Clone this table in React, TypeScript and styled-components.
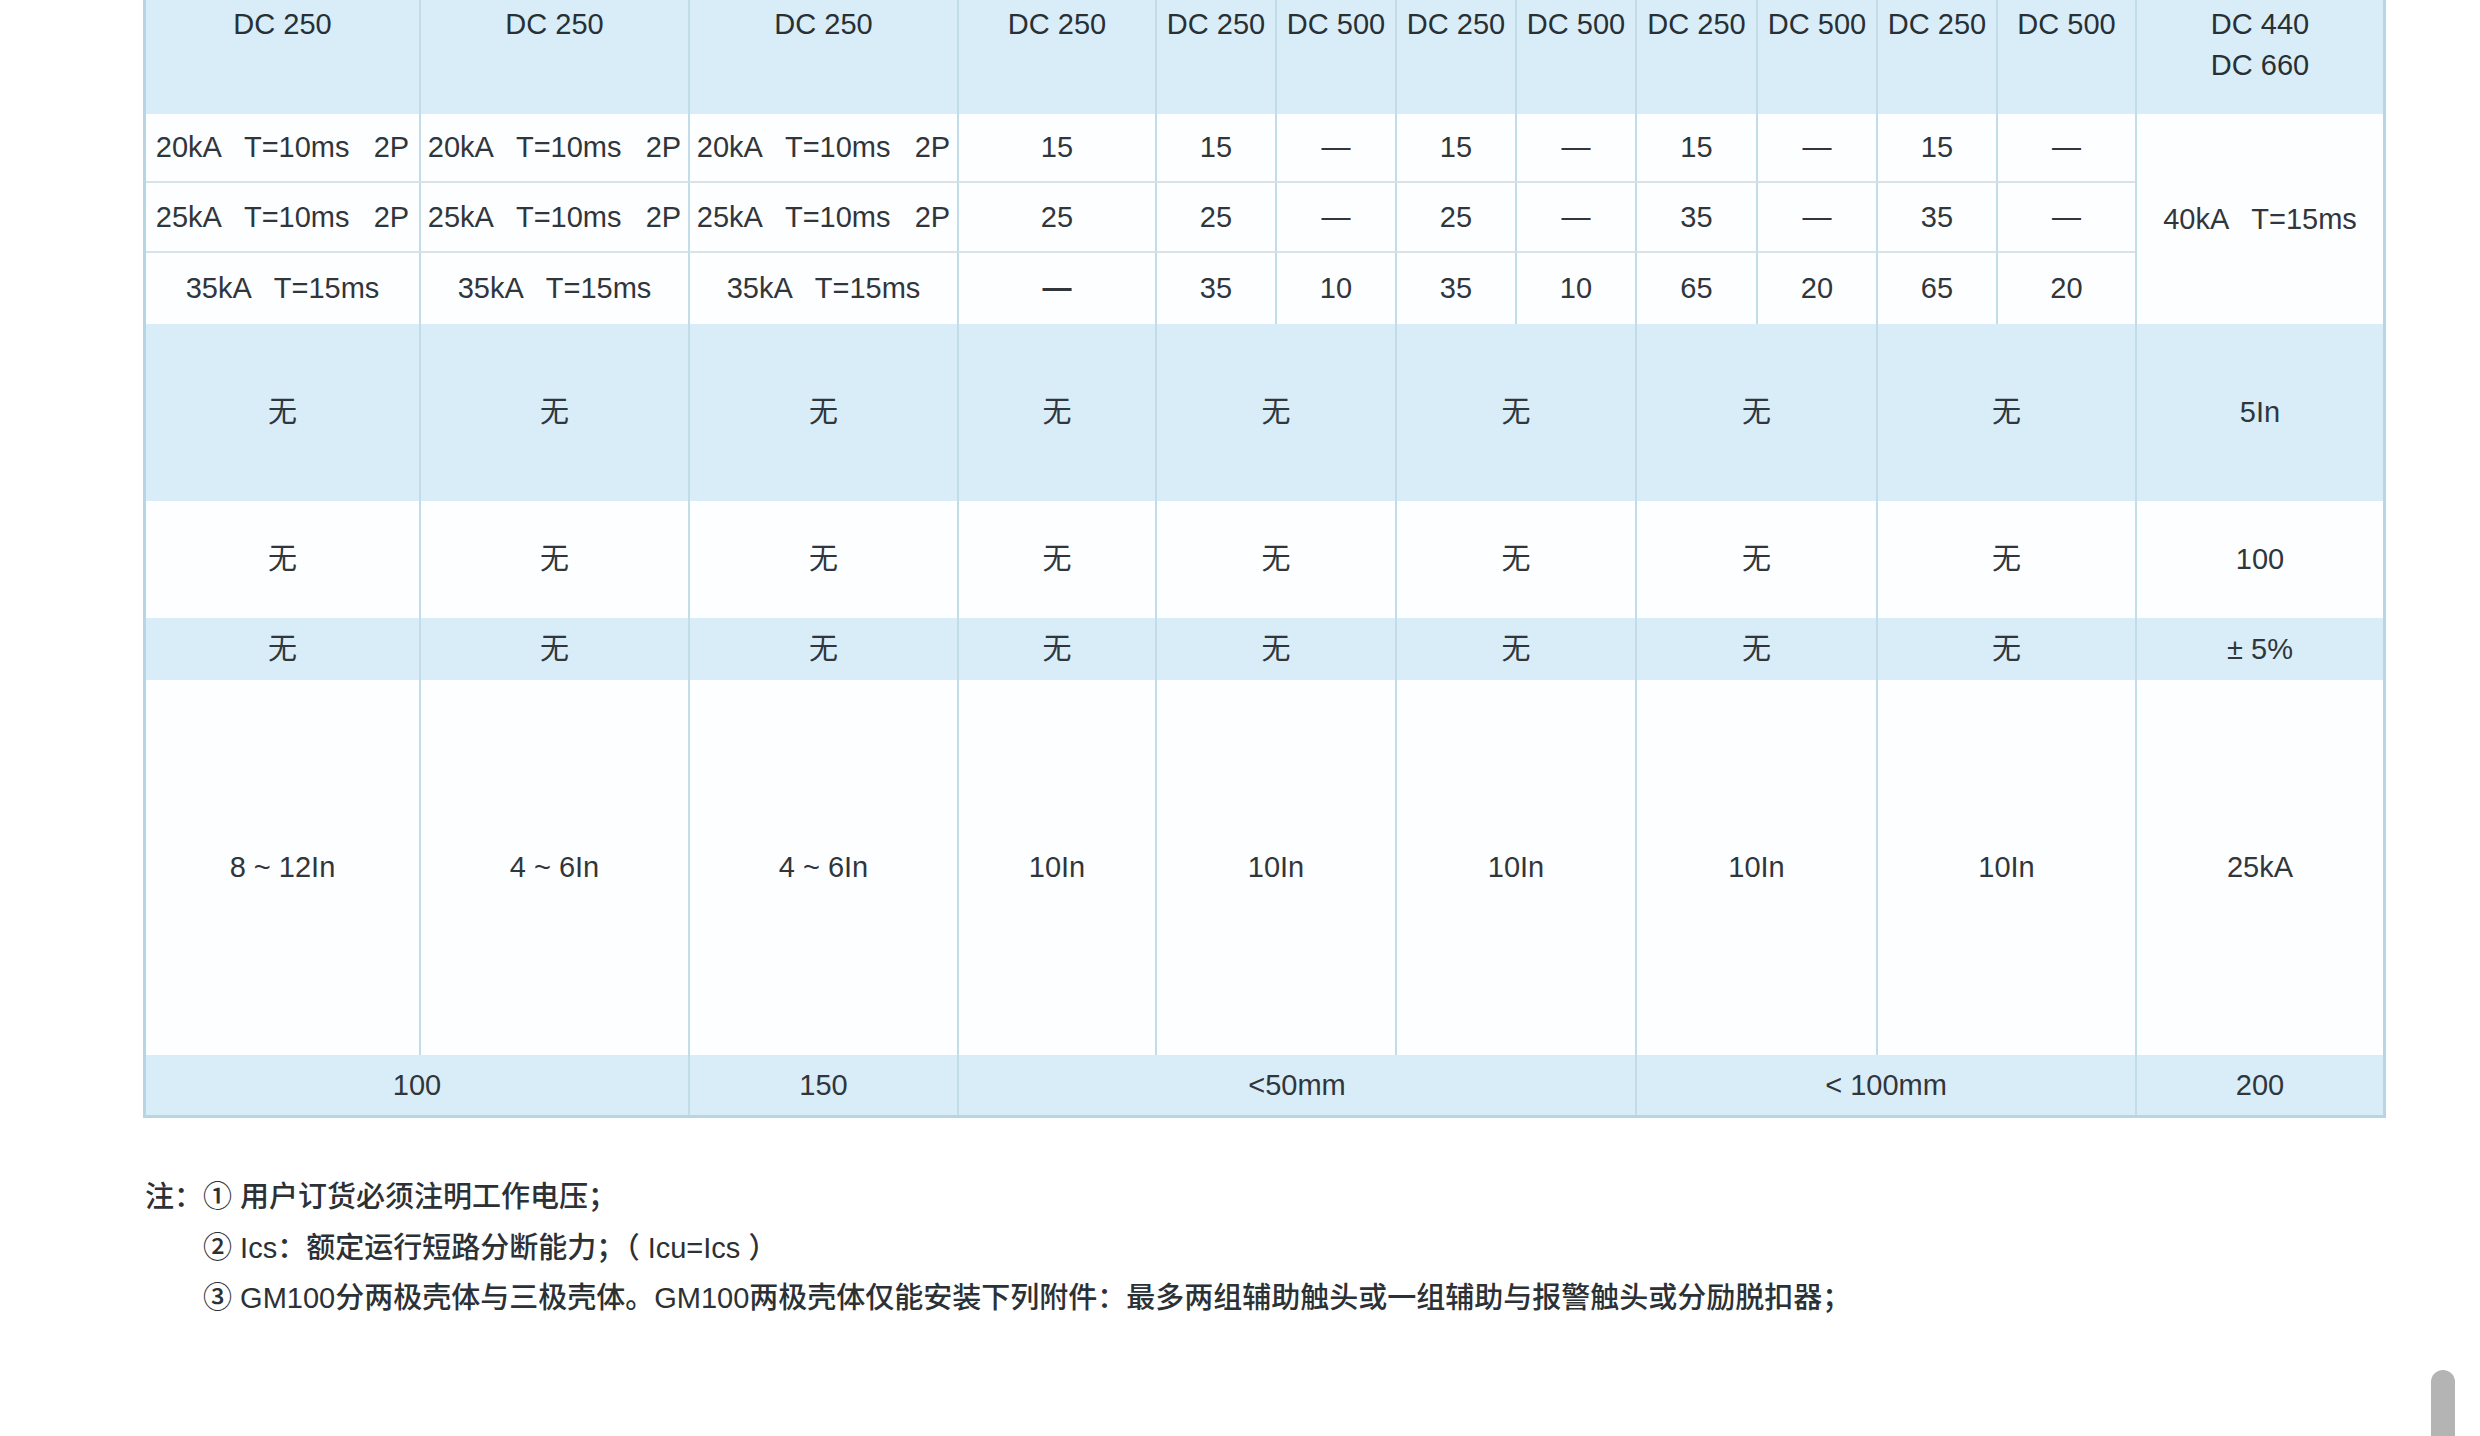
import React from 'react';
import styled, { createGlobalStyle } from 'styled-components';

const GlobalStyle = createGlobalStyle`
   html, body {
      margin: 0;
      padding: 0;
      background: #ffffff;
      overflow: hidden;
   }
   body {
      font-family: 'Liberation Sans', 'Noto Sans CJK SC', sans-serif;
      color: #30363b;
   }
`;

const BLUE = '#d9edf8';
const WHITE = '#fdfeff';

type cell = {
   t: string;
   span?: number;
   rows?: number;
   bold?: boolean;
};

type row = {
   bg: string;
   line?: boolean;
   head?: boolean;
   cells: cell[];
};

const Page = styled.div`
   width: 2480px;
   height: 1436px;
   position: relative;
`;

const Table = styled.div`
   margin-left: 143px;
   width: fit-content;
   display: grid;
   grid-template-columns: 273px 269px 269px 198px 120px 120px 120px 120px 121px 120px 120px 139px 248px;
   grid-template-rows: 114px 69px 70px 71px 177px 117px 62px 375px 60px;
   border: 3px solid #b7d6e3;
   border-top: none;
   font-size: 29px;
`;

const Cell = styled.div<{
   $span: number;
   $rows: number;
   $bg: string;
   $first: boolean;
   $line: boolean;
   $head: boolean;
   $bold: boolean;
}>`
   grid-column: span ${({ $span }) => $span};
   grid-row: span ${({ $rows }) => $rows};
   box-sizing: border-box;
   background: ${({ $bg }) => $bg};
   border-left: ${({ $first }) => ($first ? 'none' : '2px solid #c3dde8')};
   border-bottom: ${({ $line }) => ($line ? '2px solid #d9e3e7' : 'none')};
   display: flex;
   flex-direction: column;
   align-items: center;
   justify-content: ${({ $head }) => ($head ? 'flex-start' : 'center')};
   padding-top: ${({ $head }) => ($head ? '4px' : '0')};
   line-height: 41px;
   white-space: pre;
   text-align: center;
   font-weight: ${({ $bold }) => ($bold ? 700 : 400)};
   color: ${({ $head }) => ($head ? '#283035' : '#30363b')};
`;

const Notes = styled.div`
   margin: 54px 0 0 145px;
   display: grid;
   grid-template-columns: auto auto;
   justify-content: start;
   font-family: 'Liberation Sans', 'Noto Sans CJK SC', sans-serif;
   font-size: 29px;
   font-weight: 500;
   line-height: 50.5px;
   color: #2c3136;
`;

const NoteLabel = styled.div`
   grid-row: span 3;
`;

const Note = styled.div`
   white-space: pre;
`;

const Thumb = styled.div`
   position: absolute;
   left: 2431px;
   top: 1370px;
   width: 24px;
   height: 100px;
   border-radius: 12px;
   background: #b4b4b4;
`;

const wu = (last: string): cell[] => [
   { t: '无' },
   { t: '无' },
   { t: '无' },
   { t: '无' },
   { t: '无', span: 2 },
   { t: '无', span: 2 },
   { t: '无', span: 2 },
   { t: '无', span: 2 },
   { t: last },
];

const rows: row[] = [
   {
      bg: BLUE,
      head: true,
      cells: [
         { t: 'DC 250' },
         { t: 'DC 250' },
         { t: 'DC 250' },
         { t: 'DC 250' },
         { t: 'DC 250' },
         { t: 'DC 500' },
         { t: 'DC 250' },
         { t: 'DC 500' },
         { t: 'DC 250' },
         { t: 'DC 500' },
         { t: 'DC 250' },
         { t: 'DC 500' },
         { t: 'DC 440\nDC 660' },
      ],
   },
   {
      bg: WHITE,
      line: true,
      cells: [
         { t: '20kA   T=10ms   2P' },
         { t: '20kA   T=10ms   2P' },
         { t: '20kA   T=10ms   2P' },
         { t: '15' },
         { t: '15' },
         { t: '—' },
         { t: '15' },
         { t: '—' },
         { t: '15' },
         { t: '—' },
         { t: '15' },
         { t: '—' },
         { t: '40kA   T=15ms', rows: 3 },
      ],
   },
   {
      bg: WHITE,
      line: true,
      cells: [
         { t: '25kA   T=10ms   2P' },
         { t: '25kA   T=10ms   2P' },
         { t: '25kA   T=10ms   2P' },
         { t: '25' },
         { t: '25' },
         { t: '—' },
         { t: '25' },
         { t: '—' },
         { t: '35' },
         { t: '—' },
         { t: '35' },
         { t: '—' },
      ],
   },
   {
      bg: WHITE,
      cells: [
         { t: '35kA   T=15ms' },
         { t: '35kA   T=15ms' },
         { t: '35kA   T=15ms' },
         { t: '—', bold: true },
         { t: '35' },
         { t: '10' },
         { t: '35' },
         { t: '10' },
         { t: '65' },
         { t: '20' },
         { t: '65' },
         { t: '20' },
      ],
   },
   { bg: BLUE, cells: wu('5In') },
   { bg: WHITE, cells: wu('100') },
   { bg: BLUE, cells: wu('± 5%') },
   {
      bg: WHITE,
      cells: [
         { t: '8 ~ 12In' },
         { t: '4 ~ 6In' },
         { t: '4 ~ 6In' },
         { t: '10In' },
         { t: '10In', span: 2 },
         { t: '10In', span: 2 },
         { t: '10In', span: 2 },
         { t: '10In', span: 2 },
         { t: '25kA' },
      ],
   },
   {
      bg: BLUE,
      cells: [
         { t: '100', span: 2 },
         { t: '150' },
         { t: '<50mm', span: 5 },
         { t: '< 100mm', span: 4 },
         { t: '200' },
      ],
   },
];

const App: React.FC = () => {
   return (
      <Page>
         <GlobalStyle />
         <Table>
            {rows.map((r, ri) =>
               r.cells.map((c, ci) => (
                  <Cell
                     key={`${ri}-${ci}`}
                     $span={c.span ?? 1}
                     $rows={c.rows ?? 1}
                     $bg={r.bg}
                     $first={ci === 0}
                     $line={!!r.line && !c.rows}
                     $head={!!r.head}
                     $bold={!!c.bold}
                  >
                     {c.t}
                  </Cell>
               ))
            )}
         </Table>
         <Notes>
            <NoteLabel>注：</NoteLabel>
            <Note>① 用户订货必须注明工作电压；</Note>
            <Note>② Ics：额定运行短路分断能力；（ Icu=Ics ）</Note>
            <Note>
               ③ GM100分两极壳体与三极壳体。GM100两极壳体仅能安装下列附件：最多两组辅助触头或一组辅助与报警触头或分励脱扣器；
            </Note>
         </Notes>
         <Thumb />
      </Page>
   );
};

export default App;
